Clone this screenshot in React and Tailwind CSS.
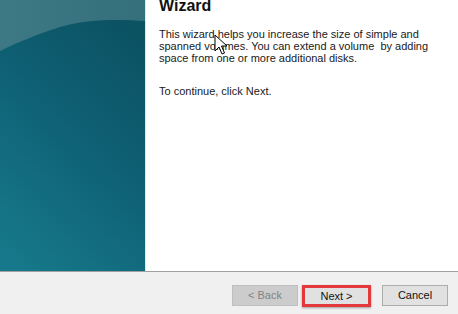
import React from 'react';

function SideArt() {
    return (
        <svg width="145" height="271" viewBox="0 0 145 271" className="block">
            <defs>
                <linearGradient id="teal" x1="0.7" y1="0" x2="0.2" y2="1">
                    <stop offset="0" stopColor="#0b5263" />
                    <stop offset="0.45" stopColor="#0f6074" />
                    <stop offset="1" stopColor="#16788a" />
                </linearGradient>
                <linearGradient id="top" x1="0" y1="0" x2="1" y2="0">
                    <stop offset="0" stopColor="#3d7985" />
                    <stop offset="1" stopColor="#346f7b" />
                </linearGradient>
            </defs>
            <rect width="145" height="271" fill="url(#teal)" />
            <path d="M0 0 H145 V21 C118 19 85 19 60 27 C38 34 16 43 0 51 Z" fill="url(#top)" />
        </svg>
    );
}

function Cursor() {
    return (
        <svg width="14" height="22" viewBox="0 0 14 22" className="absolute left-[214px] top-[34px]">
            <path d="M1 1 L1 17 L5 13 L8 20 L10.5 19 L7.5 12 L13 12 Z" fill="#fff" stroke="#000" strokeWidth="1" strokeLinejoin="round" />
        </svg>
    );
}

export default function App() {
    return (
        <div className="relative w-[458px] h-[314px] overflow-hidden flex flex-col bg-[#f0f0f0] font-['Liberation_Sans',Arial,sans-serif]">
            <div className="flex h-[271px] shrink-0">
                <div className="w-[145px] shrink-0">
                    <SideArt />
                </div>
                <div className="flex-1 bg-white border-l border-[#e6e6e6] pl-[13px]">
                    <h1 className="text-[16px] leading-[16px] font-bold text-[#111] -mt-[2px]">Wizard</h1>
                    <div className="mt-[14px] text-[11px] leading-[12px] text-[#1a1a1a] w-[290px]">
                        <p>
                            This wizard helps you increase the size of simple and<br />
                            spanned volumes. You can extend a volume&nbsp; by adding<br />
                            space from one or more additional disks.
                        </p>
                        <p className="mt-[21px]">To continue, click Next.</p>
                    </div>
                </div>
            </div>

            {/* divider */}
            <div className="h-px bg-[#a0a0a0] shrink-0" />

            {/* buttons */}
            <div className="flex items-start justify-end pr-[10px] pt-[13px] text-[11px]">
                <div className="w-[66px] h-[21px] bg-[#cccccc] border border-[#bfbfbf] text-[#838383] flex items-center justify-center">
                    &lt; Back
                </div>
                <div className="ml-[4px] w-[69px] h-[22px] border-[3px] border-[#e4393c] shadow-[0_1px_2px_rgba(0,0,0,0.35)] bg-[#e1e1e1] text-[#111] flex items-center justify-center">
                    Next &gt;
                </div>
                <div className="ml-[11px] w-[66px] h-[21px] bg-[#e1e1e1] border border-[#adadad] text-[#111] flex items-center justify-center">
                    Cancel
                </div>
            </div>

            <Cursor />
        </div>
    );
}
